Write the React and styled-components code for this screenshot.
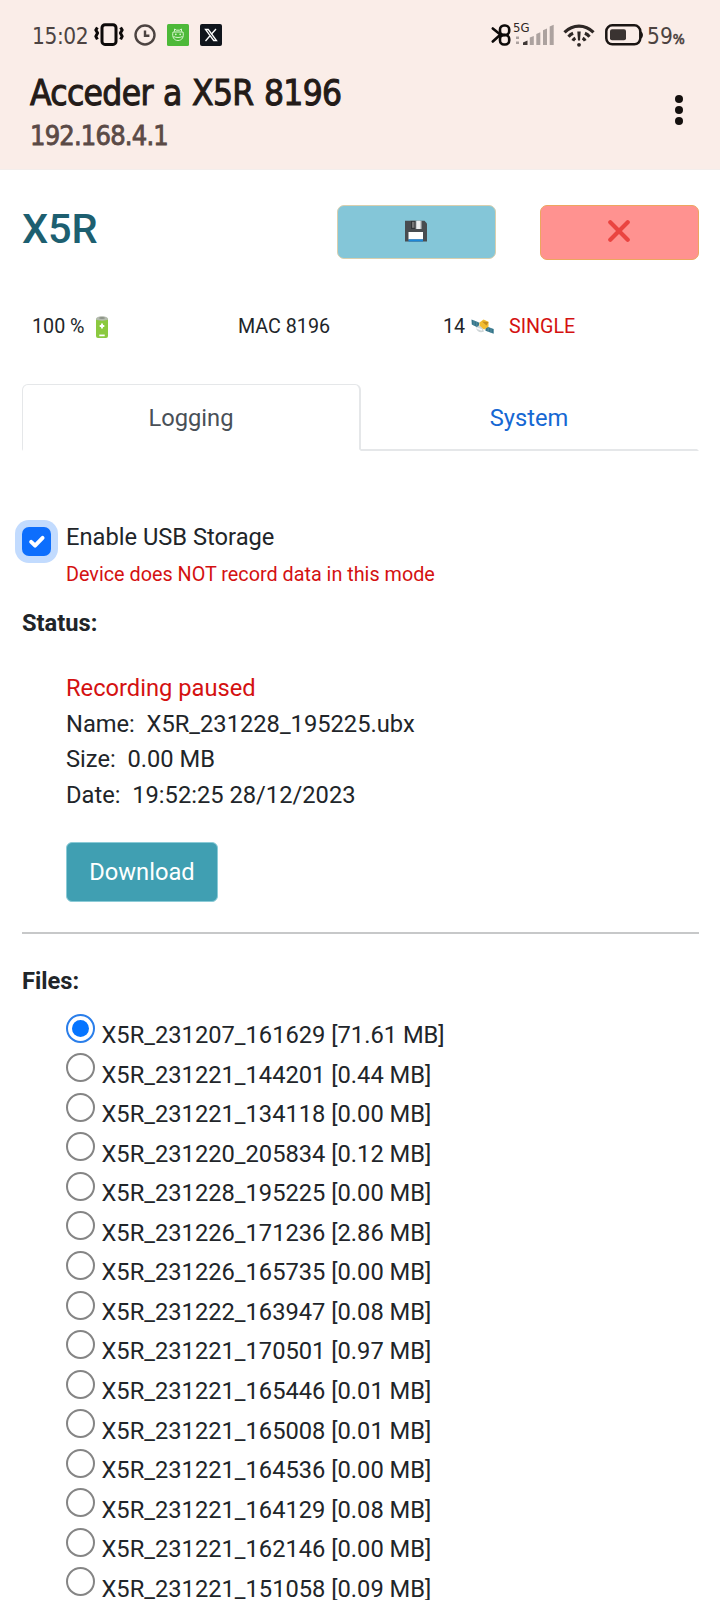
import React, { useState } from 'react'
import styled, { createGlobalStyle } from 'styled-components'

const files = [
  { name: 'X5R_231207_161629', size: '71.61 MB' },
  { name: 'X5R_231221_144201', size: '0.44 MB' },
  { name: 'X5R_231221_134118', size: '0.00 MB' },
  { name: 'X5R_231220_205834', size: '0.12 MB' },
  { name: 'X5R_231228_195225', size: '0.00 MB' },
  { name: 'X5R_231226_171236', size: '2.86 MB' },
  { name: 'X5R_231226_165735', size: '0.00 MB' },
  { name: 'X5R_231222_163947', size: '0.08 MB' },
  { name: 'X5R_231221_170501', size: '0.97 MB' },
  { name: 'X5R_231221_165446', size: '0.01 MB' },
  { name: 'X5R_231221_165008', size: '0.01 MB' },
  { name: 'X5R_231221_164536', size: '0.00 MB' },
  { name: 'X5R_231221_164129', size: '0.08 MB' },
  { name: 'X5R_231221_162146', size: '0.00 MB' },
  { name: 'X5R_231221_151058', size: '0.09 MB' },
]

const VibrateIcon = () => (
  <svg width="32" height="24" viewBox="0 0 32 24" fill="none" stroke="#0d0a09">
    <rect x="9" y="1.8" width="14" height="19.6" rx="3" strokeWidth="3" />
    <path d="M4.400 4.500l-1.600 2.500 1.800 3-1.800 3.400 1.600 3" strokeWidth="3" strokeLinejoin="round" />
    <path d="M27.600 4.500l1.600 2.500-1.800 3 1.800 3.400-1.600 3" strokeWidth="3" strokeLinejoin="round" />
  </svg>
)

const ClockIcon = () => (
  <svg width="22" height="22" viewBox="0 0 22 22" fill="none" stroke="#4c4341" strokeWidth="2.4">
    <circle cx="11" cy="11" r="9.5" />
    <path d="M11 6.5v5.3h4.4" />
  </svg>
)

const CatIcon = () => (
  <svg width="22" height="22" viewBox="0 0 22 22">
    <rect width="22" height="22" rx="1.5" fill="#4db939" />
    <g fill="none" stroke="#d9f5d0" strokeWidth="1">
      <path d="M7.500 7.500V5l2 1.200h3l2-1.200v2.500" />
      <path d="M6 8h10c1.200 5-1 8.500-5 8.500S4.800 13 6 8z" />
      <path d="M6.500 12.500c2 1.300 7 1.300 9 0" />
    </g>
    <circle cx="8.800" cy="10.300" r="0.900" fill="#d9f5d0" />
    <circle cx="13.200" cy="10.300" r="0.900" fill="#d9f5d0" />
  </svg>
)

const XIcon = () => (
  <svg width="22" height="22" viewBox="0 0 22 22">
    <rect width="22" height="22" rx="2" fill="#10151c" />
    <path d="M5.500 5.500h2.800l8.200 11h-2.800z" fill="none" stroke="#fff" strokeWidth="1.300" />
    <path d="M16 5l-4.500 5M9.800 12L5.500 17" stroke="#fff" strokeWidth="1.300" />
  </svg>
)

const BluetoothIcon = () => (
  <svg width="20" height="24" viewBox="0 0 20 24" fill="none" stroke="#0d0a09" strokeWidth="2.600" strokeLinejoin="round" strokeLinecap="round">
    <path d="M1.800 5.500L10.500 12.500" />
    <path d="M1.800 18.500L9 12h4.500" />
    <rect x="9" y="2.500" width="9.200" height="9.500" rx="4" />
    <rect x="9" y="12" width="9.200" height="9.500" rx="4" />
  </svg>
)

const SignalIcon = () => (
  <svg width="40" height="22" viewBox="0 0 40 22" fill="#aca29f">
    <rect x="1" y="12.500" width="3" height="2.500" />
    <rect x="1" y="17.500" width="3" height="2.500" />
    <path d="M8 18.500l4.500-2v4.500H8z" fill="#403836" />
    <path d="M14.800 13.500l4-1.500v9h-4zM21.300 10l4-1.700V21h-4zM28 6.200l4-1.700V21h-4zM34.700 2.500l4-1.700V21h-4z" />
  </svg>
)

const WifiIcon = () => (
  <svg width="32" height="24" viewBox="0 0 32 24" fill="none" stroke="#2e2725">
    <path d="M1.500 9.300C10 1 22 1 30.500 9.300" strokeWidth="3.200" />
    <path d="M5.500 13.700c1.300-1.600 2.900-2.700 4.600-3.400M26.500 13.700c-1.300-1.600-2.900-2.700-4.600-3.400" strokeWidth="3.100" />
    <path d="M9.800 17.800c.7-1.200 1.500-2 2.600-2.600M22.200 17.800c-.7-1.200-1.500-2-2.600-2.600" strokeWidth="3.200" />
    <path d="M14.300 8.500h3.400l-.7 9h-2z" fill="#2e2725" stroke="none" />
    <circle cx="16" cy="21.800" r="1.900" fill="#2e2725" stroke="none" />
  </svg>
)

const PhoneBatteryIcon = () => (
  <svg width="39" height="22" viewBox="0 0 39 22">
    <rect x="1.300" y="1.300" width="34" height="19" rx="6" fill="none" stroke="#1a1513" strokeWidth="2.500" />
    <path d="M36 7.500c2.600 1 2.600 6 0 7z" fill="#1a1513" />
    <rect x="5" y="5.300" width="16" height="11" rx="2" fill="#3a3331" />
  </svg>
)

const FloppyIcon = () => (
  <svg width="22" height="22" viewBox="0 0 22 22">
    <path d="M0 .8h19.500L22 3.500v18H0z" fill="#484c50" />
    <rect x="5.200" y=".8" width="11.300" height="8.200" fill="#c9cdd0" />
    <rect x="5.200" y=".8" width="5.500" height="8.200" fill="#303336" />
    <rect x="7" y="1.800" width="2.500" height="6" fill="#777" />
    <rect x="12" y=".8" width="3" height="8.200" fill="#eceeef" />
    <rect x="3.500" y="12" width="14.500" height="7.500" fill="#fff" />
    <rect x="3.500" y="19.300" width="14.500" height="2.200" fill="#1d87d8" />
  </svg>
)

const CrossIcon = () => (
  <svg width="22" height="22" viewBox="0 0 22 22" fill="none" stroke="#ea4440" strokeWidth="4.200" strokeLinecap="round">
    <path d="M2.300 2.300l17.400 17.400" />
    <path d="M19.700 2.300L2.300 19.700" />
  </svg>
)

const BatteryIcon = () => (
  <svg width="12" height="22" viewBox="0 0 12 22">
    <rect y="2" width="12" height="20" rx="2" fill="#8bc93f" />
    <path d="M0 3.500C0 1 2.500.2 6 .2s6 .8 6 3.300c-2 1.500-10 1.500-12 0z" fill="#b4bbae" />
    <ellipse cx="6" cy="2" rx="3" ry="1.100" fill="#8d9488" />
    <path d="M6 7.500v5M3.700 10h4.600" stroke="#fff" strokeWidth="1.900" />
    <path d="M3.300 19.400h5.400" stroke="#fff" strokeWidth="1.700" />
  </svg>
)

const SatelliteIcon = () => (
  <svg width="23" height="18" viewBox="0 0 23 18">
    <path d="M.5 1.500l8 3.200-1.300 5L.8 6.500z" fill="#34758a" />
    <path d="M14.500 8l8.200 3v4.800l-8.200-3z" fill="#34758a" />
    <path d="M3 2.500v5M5.800 3.600v5.200M17.200 9v4.800M20 10v4.800" stroke="#6c9bab" strokeWidth=".7" />
    <path d="M8.500 4.500l4-3 5 2.300v5l-4.300 2.700-4.700-2.500z" fill="#f2bd31" />
    <path d="M11 3.500l6.500.6-2 3.500z" fill="#c58d1d" />
    <path d="M5 9.500C8 6.500 11 8 13 13.500c-3.500 1.600-7.500.4-8-4z" fill="#cfd6d8" />
    <path d="M5.500 10l5.500 2" stroke="#f8fafa" strokeWidth="1.500" />
  </svg>
)

function App() {
  const [usb, setUsb] = useState(true)
  const [tab, setTab] = useState('Logging')
  const [selected, setSelected] = useState(files[0].name)

  return (
    <Screen>
      <GlobalStyle />
      <PhoneHeader>
        <StatusBar>
          <Clock>15:02</Clock>
          <StatusIcons>
            <VibrateIcon />
            <ClockIcon />
            <CatIcon />
            <XIcon />
          </StatusIcons>
          <SystemIcons>
            <BluetoothIcon />
            <Network>
              <SignalIcon />
              <NetworkType>5G</NetworkType>
            </Network>
            <WifiIcon />
            <PhoneBatteryIcon />
          </SystemIcons>
          <Percent>59<small>%</small></Percent>
        </StatusBar>
        <PortalBar>
          <div>
            <PortalTitle>Acceder a X5R 8196</PortalTitle>
            <PortalAddress>192.168.4.1</PortalAddress>
          </div>
          <MenuButton aria-label="menu">
            <i /><i /><i />
          </MenuButton>
        </PortalBar>
      </PhoneHeader>

      <Page>
        <TopRow>
          <Brand>X5R</Brand>
          <ActionButton $bg="#84c6d8" $border="#d9cfae" aria-label="save"><FloppyIcon /></ActionButton>
          <ActionButton $bg="#ff9290" $border="#eda65f" $tall aria-label="close"><CrossIcon /></ActionButton>
        </TopRow>

        <InfoRow>
          <span>100 % <BatteryIcon /></span>
          <span>MAC 8196</span>
          <span>14 <SatelliteIcon /><Alert>SINGLE</Alert></span>
        </InfoRow>

        <Tabs>
          {['Logging', 'System'].map((name) => (
            <Tab key={name} $active={tab === name} onClick={() => setTab(name)}>{name}</Tab>
          ))}
        </Tabs>

        <UsbRow>
          <Checkbox type="button" role="checkbox" aria-checked={usb} $checked={usb} onClick={() => setUsb(!usb)}>
            {usb && (
              <svg width="29" height="29" viewBox="0 0 20 20" fill="none" stroke="#fff" strokeWidth="2.700" strokeLinecap="round" strokeLinejoin="round">
                <path d="M6.300 10.300l2.700 2.500 5.200-5.300" />
              </svg>
            )}
          </Checkbox>
          <div>
            <UsbLabel>Enable USB Storage</UsbLabel>
            <UsbWarning>Device does NOT record data in this mode</UsbWarning>
          </div>
        </UsbRow>

        <Heading>Status:</Heading>
        <Details>
          <Alert as="p">Recording paused</Alert>
          <p>Name:&nbsp; X5R_231228_195225.ubx</p>
          <p>Size:&nbsp; 0.00 MB</p>
          <p>Date:&nbsp; 19:52:25 28/12/2023</p>
          <DownloadButton>Download</DownloadButton>
        </Details>

        <Divider />

        <Heading>Files:</Heading>
        <FileList>
          {files.map(({ name, size }) => (
            <FileRow key={name}>
              <Radio type="radio" name="file" checked={selected === name} onChange={() => setSelected(name)} />
              <span>{`${name} [${size}]`}</span>
            </FileRow>
          ))}
        </FileList>
      </Page>
    </Screen>
  )
}

const GlobalStyle = createGlobalStyle`
  * {
    box-sizing: border-box;
  }
  body {
    margin: 0;
    background: #fff;
    font-family: Roboto, sans-serif;
    color: #212529;
  }
  p, h1, h2, ul {
    margin: 0;
    padding: 0;
  }
  svg {
    display: block;
    flex: none;
  }
  button {
    font-family: inherit;
    padding: 0;
    cursor: pointer;
  }
`

const Screen = styled.div`
  width: 720px;
  height: 1600px;
  overflow: hidden;
`

const PhoneHeader = styled.header`
  height: 170px;
  background: #faede8;
  border-bottom: 1px solid #f3eeec;
  font-family: "DejaVu Sans Condensed", "DejaVu Sans", sans-serif;
  font-stretch: condensed;
`

const StatusBar = styled.div`
  height: 70px;
  padding: 0 30px 0 32px;
  display: flex;
  align-items: center;
  color: #4c4341;
`

const Clock = styled.span`
  width: 61px;
  font-size: 22.5px;
  letter-spacing: -0.4px;
  padding-top: 1px;
`

const StatusIcons = styled.div`
  display: flex;
  align-items: center;
  gap: 11px;
  svg:first-child {
    margin-right: -2px;
  }
`

const SystemIcons = styled.div`
  margin-left: auto;
  display: flex;
  align-items: center;
  > svg:nth-of-type(2) {
    margin: 0 10px 0 8px;
  }
`

const Network = styled.div`
  position: relative;
  margin-left: 4px;
`

const NetworkType = styled.span`
  position: absolute;
  left: -2px;
  top: -3px;
  font-size: 13px;
  line-height: 14px;
  color: #2e2725;
`

const Percent = styled.span`
  width: 43px;
  margin-left: 3px;
  font-size: 22.5px;
  padding-top: 1px;
  white-space: nowrap;
  small {
    font-size: 14px;
    -webkit-text-stroke: 0.6px #4c4341;
  }
`

const PortalBar = styled.div`
  display: flex;
  justify-content: space-between;
  padding: 1px 37px 0 30px;
`

const PortalTitle = styled.h1`
  font-size: 35px;
  line-height: 44px;
  font-weight: 400;
  letter-spacing: -0.65px;
  word-spacing: 1px;
  white-space: nowrap;
  color: #231b18;
  -webkit-text-stroke: 1px #231b18;
`

const PortalAddress = styled.p`
  font-size: 27px;
  line-height: 41px;
  letter-spacing: -0.8px;
  color: #5a4a46;
  -webkit-text-stroke: 0.8px #5a4a46;
`

const MenuButton = styled.button`
  display: flex;
  flex-direction: column;
  gap: 3px;
  margin-top: 24px;
  border: none;
  background: none;
  i {
    width: 8px;
    height: 8px;
    border-radius: 50%;
    background: #14100e;
  }
`

const Page = styled.main`
  padding: 0 21px 0 22px;
  font-size: 23.7px;
  line-height: 35.5px;
`

const TopRow = styled.div`
  display: flex;
  align-items: center;
  padding-top: 34px;
  height: 90px;
`

const Brand = styled.h1`
  width: 315px;
  font-size: 41.5px;
  line-height: 50px;
  font-weight: 500;
  color: #1d5f70;
  padding-bottom: 7px;
  letter-spacing: -0.2px;
`

const ActionButton = styled.button`
  width: 159px;
  height: ${({ $tall }) => ($tall ? 55 : 54)}px;
  display: flex;
  align-items: center;
  justify-content: center;
  padding: 0 1px 2px 0;
  border: 1px solid ${({ $border }) => $border};
  border-radius: 7px;
  background: ${({ $bg }) => $bg};
  & + & {
    margin-left: 44px;
  }
`

const InfoRow = styled.div`
  display: grid;
  grid-template-columns: 206px 205px 1fr;
  margin-top: 52px;
  padding-left: 10px;
  font-size: 19.7px;
  line-height: 30px;
  span {
    display: flex;
    align-items: center;
    white-space: pre;
  }
  svg {
    margin-left: 7px;
  }
  span:last-child > svg {
    margin-left: 1px;
  }
`

const Alert = styled.span`
  color: #d41111;
  ${InfoRow} & {
    margin-left: 15px;
  }
`

const Tabs = styled.nav`
  display: flex;
  margin-top: 42px;
`

const Tab = styled.button`
  flex: 1;
  height: 67px;
  padding-top: 1px;
  font-size: 23.7px;
  color: ${({ $active }) => ($active ? '#495057' : '#1668d3')};
  background: #fff;
  border: 2px solid transparent;
  border-color: ${({ $active }) => ($active ? '#e5e7e9 #e5e7e9 transparent' : 'transparent transparent #e5e7e9')};
  border-left-width: ${({ $active }) => ($active ? '1px' : '0')};
  border-top-width: 1px;
  border-radius: ${({ $active }) => ($active ? '6px 6px 0 0' : '0')};
`

const UsbRow = styled.div`
  display: flex;
  margin-top: 68px;
`

const Checkbox = styled.button`
  flex: none;
  width: 29px;
  height: 29px;
  margin: 8px 15px 0 0;
  border: ${({ $checked }) => ($checked ? 'none' : '1.5px solid #bfbfbf')};
  border-radius: 7px;
  background: ${({ $checked }) => ($checked ? '#0d6efd' : '#fff')};
  box-shadow: 0 0 0 7px #c2dbfe;
`

const UsbLabel = styled.p`
  line-height: 36px;
`

const UsbWarning = styled.p`
  padding-top: 1px;
  font-size: 19.8px;
  line-height: 37px;
  color: #d41111;
`

const Heading = styled.h2`
  margin-top: 13px;
  font-size: 23.7px;
  line-height: 35px;
  font-weight: 700;
`

const Details = styled.section`
  margin-top: 30px;
  padding-left: 44px;
`

const DownloadButton = styled.button`
  display: block;
  width: 152px;
  height: 60px;
  margin-top: 29px;
  font-size: 23.7px;
  color: #fff;
  background: #409fb2;
  border: 1.5px solid #8bcbd7;
  border-radius: 6px;
`

const Divider = styled.hr`
  height: 2px;
  margin: 30px 0 30px;
  border: none;
  background: #c7c8c9;
`

const FileList = styled.ul`
  margin-top: 14.6px;
  padding-left: 44px;
`

const FileRow = styled.label`
  display: flex;
  height: 39.57px;
  span {
    margin-left: 6.500px;
    padding-top: 4.400px;
    white-space: nowrap;
  }
`

const Radio = styled.input`
  appearance: none;
  flex: none;
  width: 29px;
  height: 29px;
  margin: 0;
  padding: 4px;
  border: 2px solid #858585;
  border-radius: 50%;
  background-clip: content-box;
  &:checked {
    border-color: #2a7eea;
    background-color: #0675ff;
  }
`

export default App
